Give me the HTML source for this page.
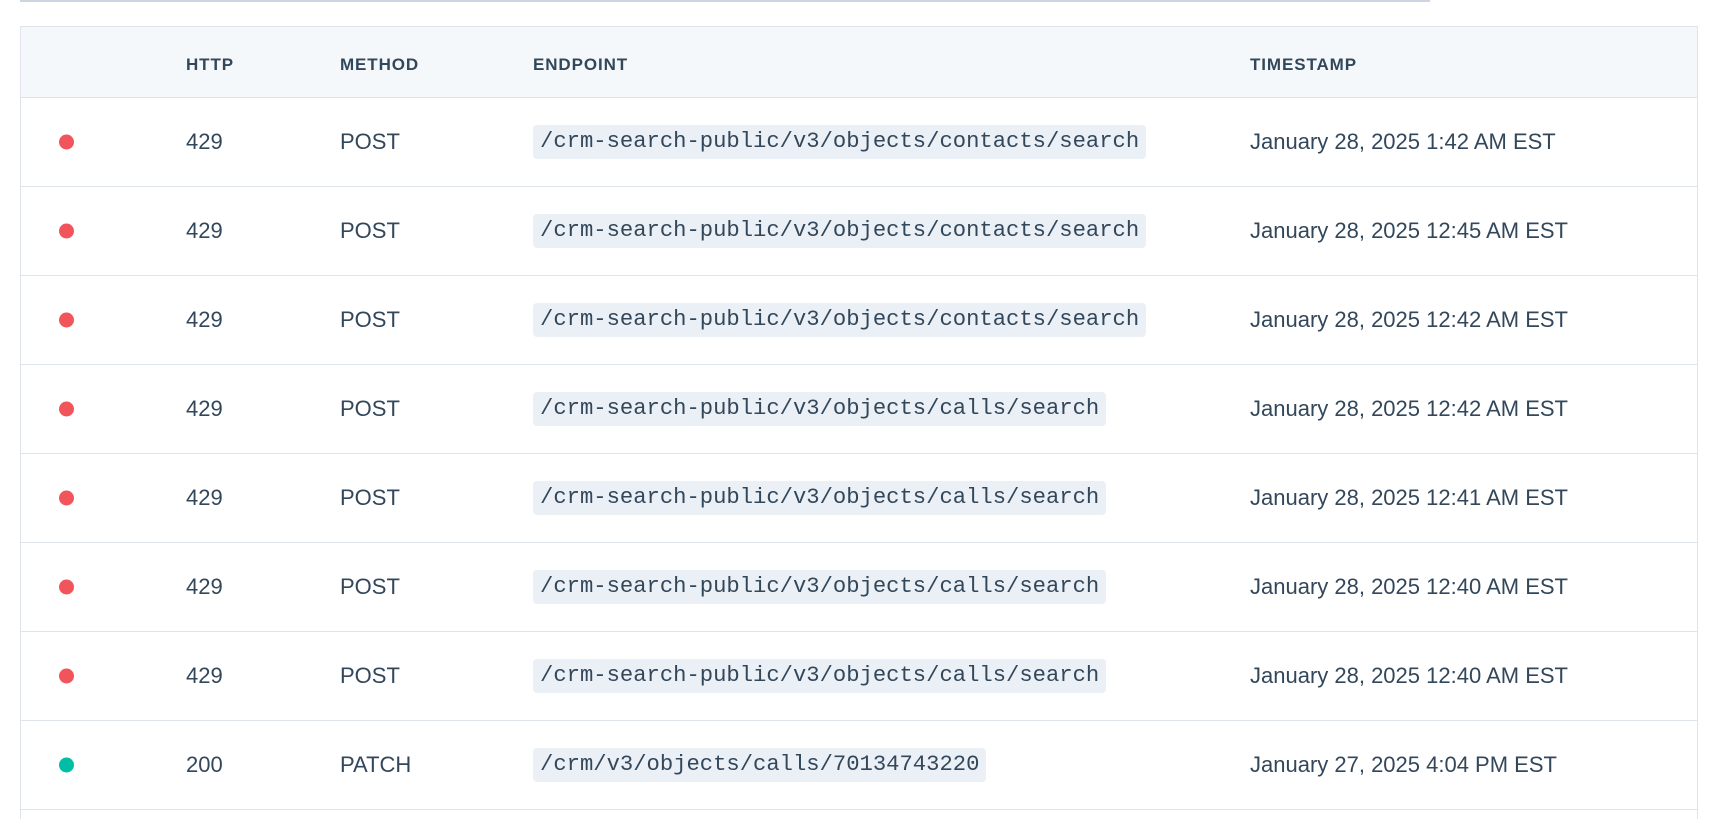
<!DOCTYPE html>
<html><head><meta charset="utf-8"><style>
html,body{margin:0;overflow:hidden;height:819px}
body{background:#fff;width:1731px;font-family:"Liberation Sans",sans-serif;color:#33475b;position:relative}
.topline{position:absolute;left:20px;top:0;width:1410px;height:2px;background:#cbd6e2}
.tbl{position:absolute;left:20px;top:26px;width:1676px;border:1px solid #dfe3eb;border-bottom:none}
.hd{height:70px;background:#f5f8fa;border-bottom:1px solid #dfe3eb;position:relative}
.hd span{position:absolute;top:3px;line-height:70px;font-weight:bold;font-size:17px;letter-spacing:.9px}
.row{height:88px;border-bottom:1px solid #dfe3eb;position:relative}
.row>*{position:absolute;top:50%;transform:translateY(-50%)}
.dot{left:38px;width:15px;height:15px;border-radius:50%;background:#f2545b}
.g{background:#00bda5}
.c1{left:165px;font-size:22px}
.c2{left:319px;font-size:22px}
.code{left:512px;background:#eaf0f6;border-radius:4px;padding:0 7px;height:34px;line-height:34px;font-family:"Liberation Mono","DejaVu Sans Mono",monospace;font-size:22.2px}
.c4{left:1229px;font-size:22px}
.last{height:10px;border:none}
</style></head><body>
<div class="topline"></div>
<div class="tbl">
<div class="hd"><span style="left:165px">HTTP</span><span style="left:319px">METHOD</span><span style="left:512px">ENDPOINT</span><span style="left:1229px">TIMESTAMP</span></div>
<div class="row"><div class="dot"></div><div class="c1">429</div><div class="c2">POST</div><div class="code">/crm-search-public/v3/objects/contacts/search</div><div class="c4">January 28, 2025 1:42 AM EST</div></div>
<div class="row"><div class="dot"></div><div class="c1">429</div><div class="c2">POST</div><div class="code">/crm-search-public/v3/objects/contacts/search</div><div class="c4">January 28, 2025 12:45 AM EST</div></div>
<div class="row"><div class="dot"></div><div class="c1">429</div><div class="c2">POST</div><div class="code">/crm-search-public/v3/objects/contacts/search</div><div class="c4">January 28, 2025 12:42 AM EST</div></div>
<div class="row"><div class="dot"></div><div class="c1">429</div><div class="c2">POST</div><div class="code">/crm-search-public/v3/objects/calls/search</div><div class="c4">January 28, 2025 12:42 AM EST</div></div>
<div class="row"><div class="dot"></div><div class="c1">429</div><div class="c2">POST</div><div class="code">/crm-search-public/v3/objects/calls/search</div><div class="c4">January 28, 2025 12:41 AM EST</div></div>
<div class="row"><div class="dot"></div><div class="c1">429</div><div class="c2">POST</div><div class="code">/crm-search-public/v3/objects/calls/search</div><div class="c4">January 28, 2025 12:40 AM EST</div></div>
<div class="row"><div class="dot"></div><div class="c1">429</div><div class="c2">POST</div><div class="code">/crm-search-public/v3/objects/calls/search</div><div class="c4">January 28, 2025 12:40 AM EST</div></div>
<div class="row"><div class="dot g"></div><div class="c1">200</div><div class="c2">PATCH</div><div class="code">/crm/v3/objects/calls/70134743220</div><div class="c4">January 27, 2025 4:04 PM EST</div></div>
<div class="row last"></div>
</div>
</body></html>
